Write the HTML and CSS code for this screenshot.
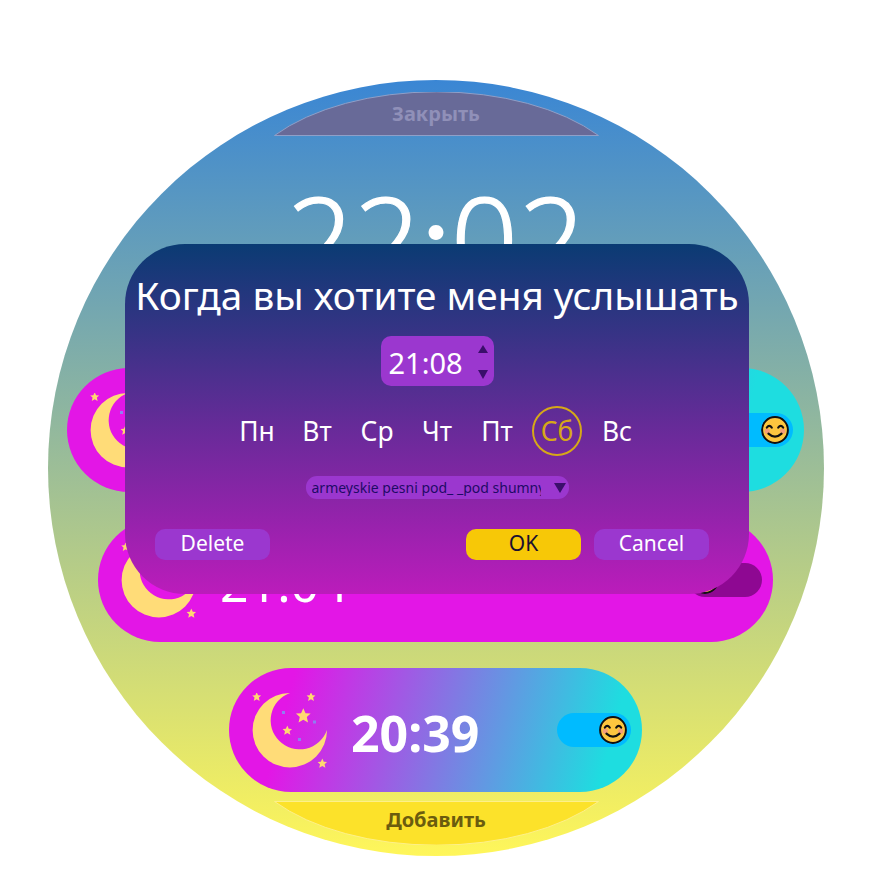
FILE: index.html
```html
<!DOCTYPE html>
<html lang="ru">
<head>
<meta charset="utf-8">
<title>Будильник</title>
<link rel="stylesheet" href="styles.css">
</head>
<body>
<svg class="defs" width="0" height="0" aria-hidden="true">
  <symbol id="star" viewBox="-1.1 -1.1 2.2 2.2">
    <path d="M0-1.05L.32-.36 1.05-.3.5.2.68.98 0 .57-.68.98-.5.2-1.05-.3-.32-.36Z"/>
  </symbol>
  <symbol id="moon" viewBox="0 0 80 80">
    <path class="moon-body" d="M38 0A37.2 37.2 0 1 0 75 37A29 29 0 1 1 38 0Z"/>
    <g class="moon-star">
      <use href="#star" x="0" y="-1" width="9.4" height="9.4"/>
      <use href="#star" x="54.3" y="-1" width="9.4" height="9.4"/>
      <use href="#star" x="43.6" y="15" width="15.4" height="15.4"/>
      <use href="#star" x="30.3" y="32.3" width="10" height="10"/>
      <use href="#star" x="65.3" y="65.3" width="10" height="10"/>
    </g>
    <g class="moon-dot">
      <rect x="30" y="18" width="3" height="3"/>
      <rect x="61" y="27.5" width="3" height="3"/>
      <rect x="46" y="45" width="3" height="3"/>
    </g>
  </symbol>
  <symbol id="smile" viewBox="0 0 28 28">
    <circle class="face" cx="14" cy="14" r="12.9"/>
    <circle class="blush" cx="6.3" cy="15.2" r="2.6"/>
    <circle class="blush" cx="21.7" cy="15.2" r="2.6"/>
    <path class="face-line" d="M5.8 11.6Q8.3 8.2 10.8 11.6M17.2 11.6Q19.7 8.2 22.2 11.6M7.4 17.6Q14 23.6 20.6 17.6"/>
  </symbol>
</svg>

<main class="watch">
  <button class="cap cap-close">
    <svg class="cap-shape" viewBox="0 0 325 44"><path d="M.5 43.5A200 105.6 0 0 1 324.5 43.5Z"/></svg>
    <span class="cap-label">Закрыть</span>
  </button>
  <div class="clock">22<span class="clock-colon">:</span>02</div>

  <section class="alarms">
    <article class="alarm alarm-wide alarm-on">
      <svg class="moon"><use href="#moon"/></svg>
      <span class="alarm-time">21:30</span>
      <span class="toggle toggle-on"><svg class="thumb"><use href="#smile"/></svg></span>
    </article>
    <article class="alarm alarm-mid alarm-off">
      <svg class="moon"><use href="#moon"/></svg>
      <span class="alarm-time alarm-time-off">21:04</span>
      <span class="toggle toggle-off"><svg class="thumb"><use href="#smile"/></svg></span>
    </article>
    <article class="alarm alarm-narrow alarm-on">
      <svg class="moon"><use href="#moon"/></svg>
      <span class="alarm-time">20:39</span>
      <span class="toggle toggle-on"><svg class="thumb"><use href="#smile"/></svg></span>
    </article>
  </section>

  <button class="cap cap-add">
    <svg class="cap-shape" viewBox="0 0 325 44"><path d="M.5 .5A200 105.6 0 0 0 324.5 .5Z"/></svg>
    <span class="cap-label">Добавить</span>
  </button>

  <section class="dialog">
    <h1 class="dialog-title">Когда вы хотите меня услышать</h1>
    <div class="time-input">
      <span class="time-value">21:08</span>
      <span class="spin">
        <span class="tri tri-up"></span>
        <span class="tri tri-down"></span>
      </span>
    </div>
    <div class="days">
      <span class="day">Пн</span>
      <span class="day">Вт</span>
      <span class="day">Ср</span>
      <span class="day">Чт</span>
      <span class="day">Пт</span>
      <span class="day day-active">Сб</span>
      <span class="day">Вс</span>
    </div>
    <div class="select">
      <span class="select-text">armeyskie pesni pod_ _pod shumnyj</span>
      <span class="tri tri-select"></span>
    </div>
    <div class="actions">
      <button class="btn">Delete</button>
      <span class="actions-right">
        <button class="btn btn-ok">OK</button>
        <button class="btn">Cancel</button>
      </span>
    </div>
  </section>
</main>
</body>
</html>
```

FILE: styles.css
```css
* { box-sizing: border-box; }
html, body { margin: 0; height: 100%; background: #fff; }
body {
  width: 873px;
  height: 895px;
  overflow: hidden;
  font-family: "Noto Sans", "Open Sans", sans-serif;
  padding: 80px 0 0 48px;
}
.defs { position: absolute; }
button { font-family: inherit; border: 0; padding: 0; }

.watch {
  position: relative;
  width: 776px;
  height: 776px;
  border-radius: 50%;
  background: linear-gradient(180deg, #3a86d4 0%, #fff65a 100%);
  display: flex;
  flex-direction: column;
  align-items: center;
  padding-top: 12px;
  overflow: hidden;
}

.cap {
  position: relative;
  flex: none;
  width: 325px;
  height: 44px;
  background: none;
  font-size: 20px;
  font-weight: 700;
  line-height: 1;
}
.cap-shape { position: absolute; left: 0; top: 0; width: 325px; height: 44px; }
.cap-label { position: relative; }
.cap-close { color: #9090b8; }
.cap-close .cap-shape path { fill: #686a98; stroke: #8f9fc8; stroke-width: 1; }
.cap-add { margin-top: 9px; color: #6b5c0e; padding-bottom: 7px; }
.cap-add .cap-shape path { fill: #fce22a; stroke: #fdf08a; stroke-width: 1; }

.clock {
  flex: none;
  height: 232px;
  width: 100%;
  text-align: center;
  color: #fff;
  font-size: 118px;
  font-weight: 300;
  -webkit-text-stroke: 1.2px #fff;
  line-height: 1;
  padding-top: 43px;
}
.clock-colon { font-family: "Lato", sans-serif; font-weight: 400; -webkit-text-stroke: 0; }

.alarms {
  flex: none;
  display: flex;
  flex-direction: column;
  align-items: center;
  gap: 26px;
  width: 100%;
  padding-right: 1px;
}
.alarm {
  height: 124px;
  border-radius: 62px;
  display: flex;
  align-items: center;
  padding: 0 11px 0 23px;
}
.alarm-wide { width: 737px; }
.alarm-mid { width: 675px; }
.alarm-narrow { width: 413px; }
.alarm-on { background: linear-gradient(105deg, #e316e6 15%, #1edde0 90%); }
.alarm-off { background: #e316e6; }

.moon { width: 80px; height: 80px; flex: none; margin-top: 6px; }
.moon-body { fill: #ffdc78; }
.moon-star { fill: #ffd870; }
.moon-dot { fill: #8f7ff0; }

.alarm-time {
  margin-left: 19px;
  margin-top: 6px;
  color: #fff;
  font-size: 50px;
  font-weight: 700;
  line-height: 1;
}
.alarm-time-off { font-weight: 400; }

.toggle {
  margin-left: auto;
  flex: none;
  width: 74px;
  height: 34px;
  border-radius: 17px;
  display: flex;
  align-items: center;
}
.toggle-on { background: #00bbff; justify-content: flex-end; padding-right: 4px; }
.toggle-off { background: #8e0892; justify-content: flex-start; padding-left: 3px; }
.thumb { width: 28px; height: 28px; }
.face { fill: #fcc63f; stroke: #111; stroke-width: 2; }
.blush { fill: #f59c78; }
.face-line { fill: none; stroke: #111; stroke-width: 2.1; stroke-linecap: round; }

.dialog {
  position: absolute;
  left: 77px;
  top: 164px;
  width: 624px;
  height: 350px;
  border-radius: 60px;
  background: linear-gradient(180deg, #0a3b73 0%, #bb1cbb 100%);
  display: flex;
  flex-direction: column;
  align-items: center;
  padding: 26px 40px 0 30px;
  color: #fff;
}
.dialog-title {
  margin: 0 -40px 0 -30px;
  width: 624px;
  text-align: center;
  font-size: 38.75px;
  font-weight: 400;
  line-height: 50px;
  white-space: nowrap;
}
.time-input {
  margin-top: 16px;
  margin-left: 10px;
  width: 113px;
  height: 50px;
  border-radius: 10px;
  background: #9b37cf;
  display: flex;
  align-items: center;
  padding-left: 8px;
}
.time-value { font-size: 29px; line-height: 1; padding-top: 3px; }
.spin {
  margin-left: auto;
  margin-right: 6px;
  margin-top: 2px;
  height: 34px;
  display: flex;
  flex-direction: column;
  justify-content: space-between;
  align-items: center;
}
.tri { display: block; width: 0; height: 0; border-style: solid; border-color: transparent; }
.tri-up { border-width: 0 5.5px 8px; border-bottom-color: #3a0f6b; }
.tri-down { border-width: 9px 5.5px 0; border-top-color: #3a0f6b; }
.tri-select { border-width: 10px 6px 0; border-top-color: #3a0f6b; margin-left: auto; }

.days {
  margin-top: 20px;
  margin-left: 10px;
  display: flex;
  gap: 10px;
}
.day {
  width: 50px;
  height: 50px;
  border-radius: 50%;
  display: flex;
  align-items: center;
  justify-content: center;
  font-size: 26.4px;
  line-height: 1;
  border: 2.5px solid transparent;
}
.day-active { border-color: #d6a818; color: #d6a818; }

.select {
  margin-top: 20px;
  margin-left: 10px;
  width: 263px;
  height: 23px;
  border-radius: 11px;
  background: #9b37cf;
  display: flex;
  align-items: center;
  padding: 0 3px 0 6px;
  color: #1e0a66;
  font-size: 14px;
  line-height: 1;
}
.select-text { width: 229px; overflow: hidden; white-space: nowrap; padding: 2px 0 1px; }

.actions {
  margin-top: 30px;
  width: 100%;
  display: flex;
  justify-content: space-between;
}
.actions-right { display: flex; gap: 13px; }
.btn {
  width: 115px;
  height: 31px;
  border-radius: 10px;
  background: #9b37cf;
  color: #fff;
  font-size: 21px;
  line-height: 1;
  padding-bottom: 2px;
}
.btn-ok { background: #f7c807; color: #1c1030; }
```
